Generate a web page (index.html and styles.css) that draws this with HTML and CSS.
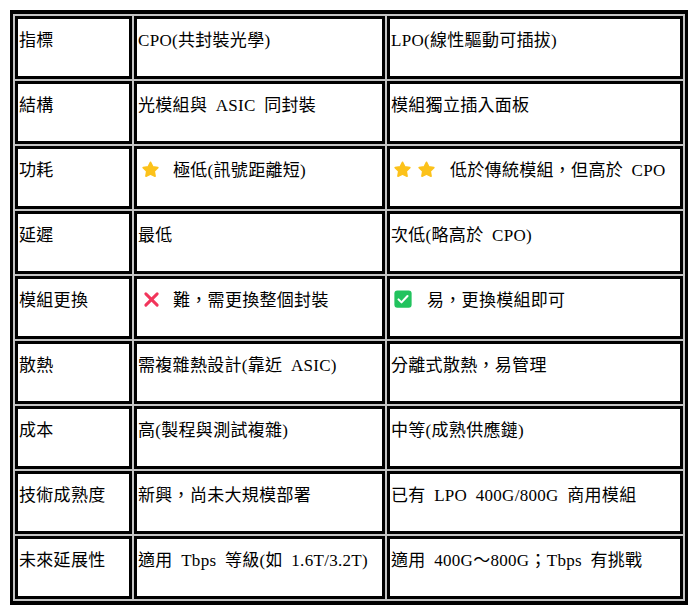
FILE: index.html
```html
<!DOCTYPE html>
<html lang="zh-Hant">
<head>
<meta charset="utf-8">
<title>CPO vs LPO</title>
<link rel="stylesheet" href="styles.css">
</head>
<body>
<table class="cmp">
  <tr>
    <td class="c1">指標</td>
    <td class="c2">CPO(共封裝光學)</td>
    <td class="c3">LPO(線性驅動可插拔)</td>
  </tr>
  <tr>
    <td>結構</td>
    <td>光模組與 ASIC 同封裝</td>
    <td>模組獨立插入面板</td>
  </tr>
  <tr>
    <td>功耗</td>
    <td><svg class="emo star first2 last2" viewBox="0 0 24 24"><polygon points="12,1.8 15.2,8.3 22.3,9.3 17.2,14.4 18.4,21.5 12,18.2 5.6,21.5 6.8,14.4 1.7,9.3 8.8,8.3"/></svg>極低(訊號距離短)</td>
    <td><svg class="emo star first3" viewBox="0 0 24 24"><polygon points="12,1.8 15.2,8.3 22.3,9.3 17.2,14.4 18.4,21.5 12,18.2 5.6,21.5 6.8,14.4 1.7,9.3 8.8,8.3"/></svg><svg class="emo star mid last3" viewBox="0 0 24 24"><polygon points="12,1.8 15.2,8.3 22.3,9.3 17.2,14.4 18.4,21.5 12,18.2 5.6,21.5 6.8,14.4 1.7,9.3 8.8,8.3"/></svg>低於傳統模組，但高於 CPO</td>
  </tr>
  <tr>
    <td>延遲</td>
    <td>最低</td>
    <td>次低(略高於 CPO)</td>
  </tr>
  <tr>
    <td>模組更換</td>
    <td><svg class="emo cross" viewBox="0 0 24 24"><path d="M4 4 L20 20 M20 4 L4 20"/></svg>難，需更換整個封裝</td>
    <td><svg class="emo check" viewBox="0 0 24 24"><rect x="0.5" y="0.5" width="23" height="23" rx="4"/><path d="M6 12.5 L10 16.5 L18 8"/></svg>易，更換模組即可</td>
  </tr>
  <tr>
    <td>散熱</td>
    <td>需複雜熱設計(靠近 ASIC)</td>
    <td>分離式散熱，易管理</td>
  </tr>
  <tr>
    <td>成本</td>
    <td>高(製程與測試複雜)</td>
    <td>中等(成熟供應鏈)</td>
  </tr>
  <tr>
    <td>技術成熟度</td>
    <td>新興，尚未大規模部署</td>
    <td>已有 LPO 400G/800G 商用模組</td>
  </tr>
  <tr>
    <td>未來延展性</td>
    <td>適用 Tbps 等級(如 1.6T/3.2T)</td>
    <td>適用 400G～800G；Tbps 有挑戰</td>
  </tr>
</table>
</body>
</html>
```

FILE: styles.css
```css
html, body {
  background: #ffffff;
}

body {
  margin: 10px 0 0 10px;
  font-family: "Liberation Serif", "Noto Sans CJK TC", serif;
  font-size: 17px;
  letter-spacing: 0.3px;
  word-spacing: 4px;
  color: #000000;
}

.cmp {
  border-collapse: separate;
  border-spacing: 2px;
  border-style: solid;
  border-color: #000000;
  border-width: 4px 3px 4px 3px;
  background: #c4c4c4;
  table-layout: fixed;
}

.cmp td {
  box-sizing: border-box;
  height: 63px;
  background: #ffffff;
  border: 3px solid #000000;
  padding: 10px 1px 0 1px;
  line-height: 24px;
  vertical-align: top;
  white-space: nowrap;
}

.cmp td.c1 { width: 117px; }
.cmp td.c2 { width: 251px; }
.cmp td.c3 { width: 296px; }

.emo {
  width: 17px;
  height: 17px;
  vertical-align: -2px;
  overflow: visible;
}

.star polygon {
  fill: #fcc21b;
  stroke: #fcc21b;
  stroke-width: 2.4;
  stroke-linejoin: round;
}

.first2 { margin-left: 4px; }
.first3 { margin-left: 3px; }
.mid { margin-left: 7px; }
.last2 { margin-right: 14px; }
.last3 { margin-right: 15px; }

.cross {
  margin-left: 5px;
  margin-right: 13px;
}

.cross path {
  fill: none;
  stroke: #f2355b;
  stroke-width: 4.2;
  stroke-linecap: round;
}

.check {
  width: 18px;
  height: 18px;
  margin-left: 3px;
  margin-right: 15px;
}

.check rect {
  fill: #22c35e;
}

.check path {
  fill: none;
  stroke: #ffffff;
  stroke-width: 2.8;
  stroke-linecap: round;
  stroke-linejoin: round;
}
```
